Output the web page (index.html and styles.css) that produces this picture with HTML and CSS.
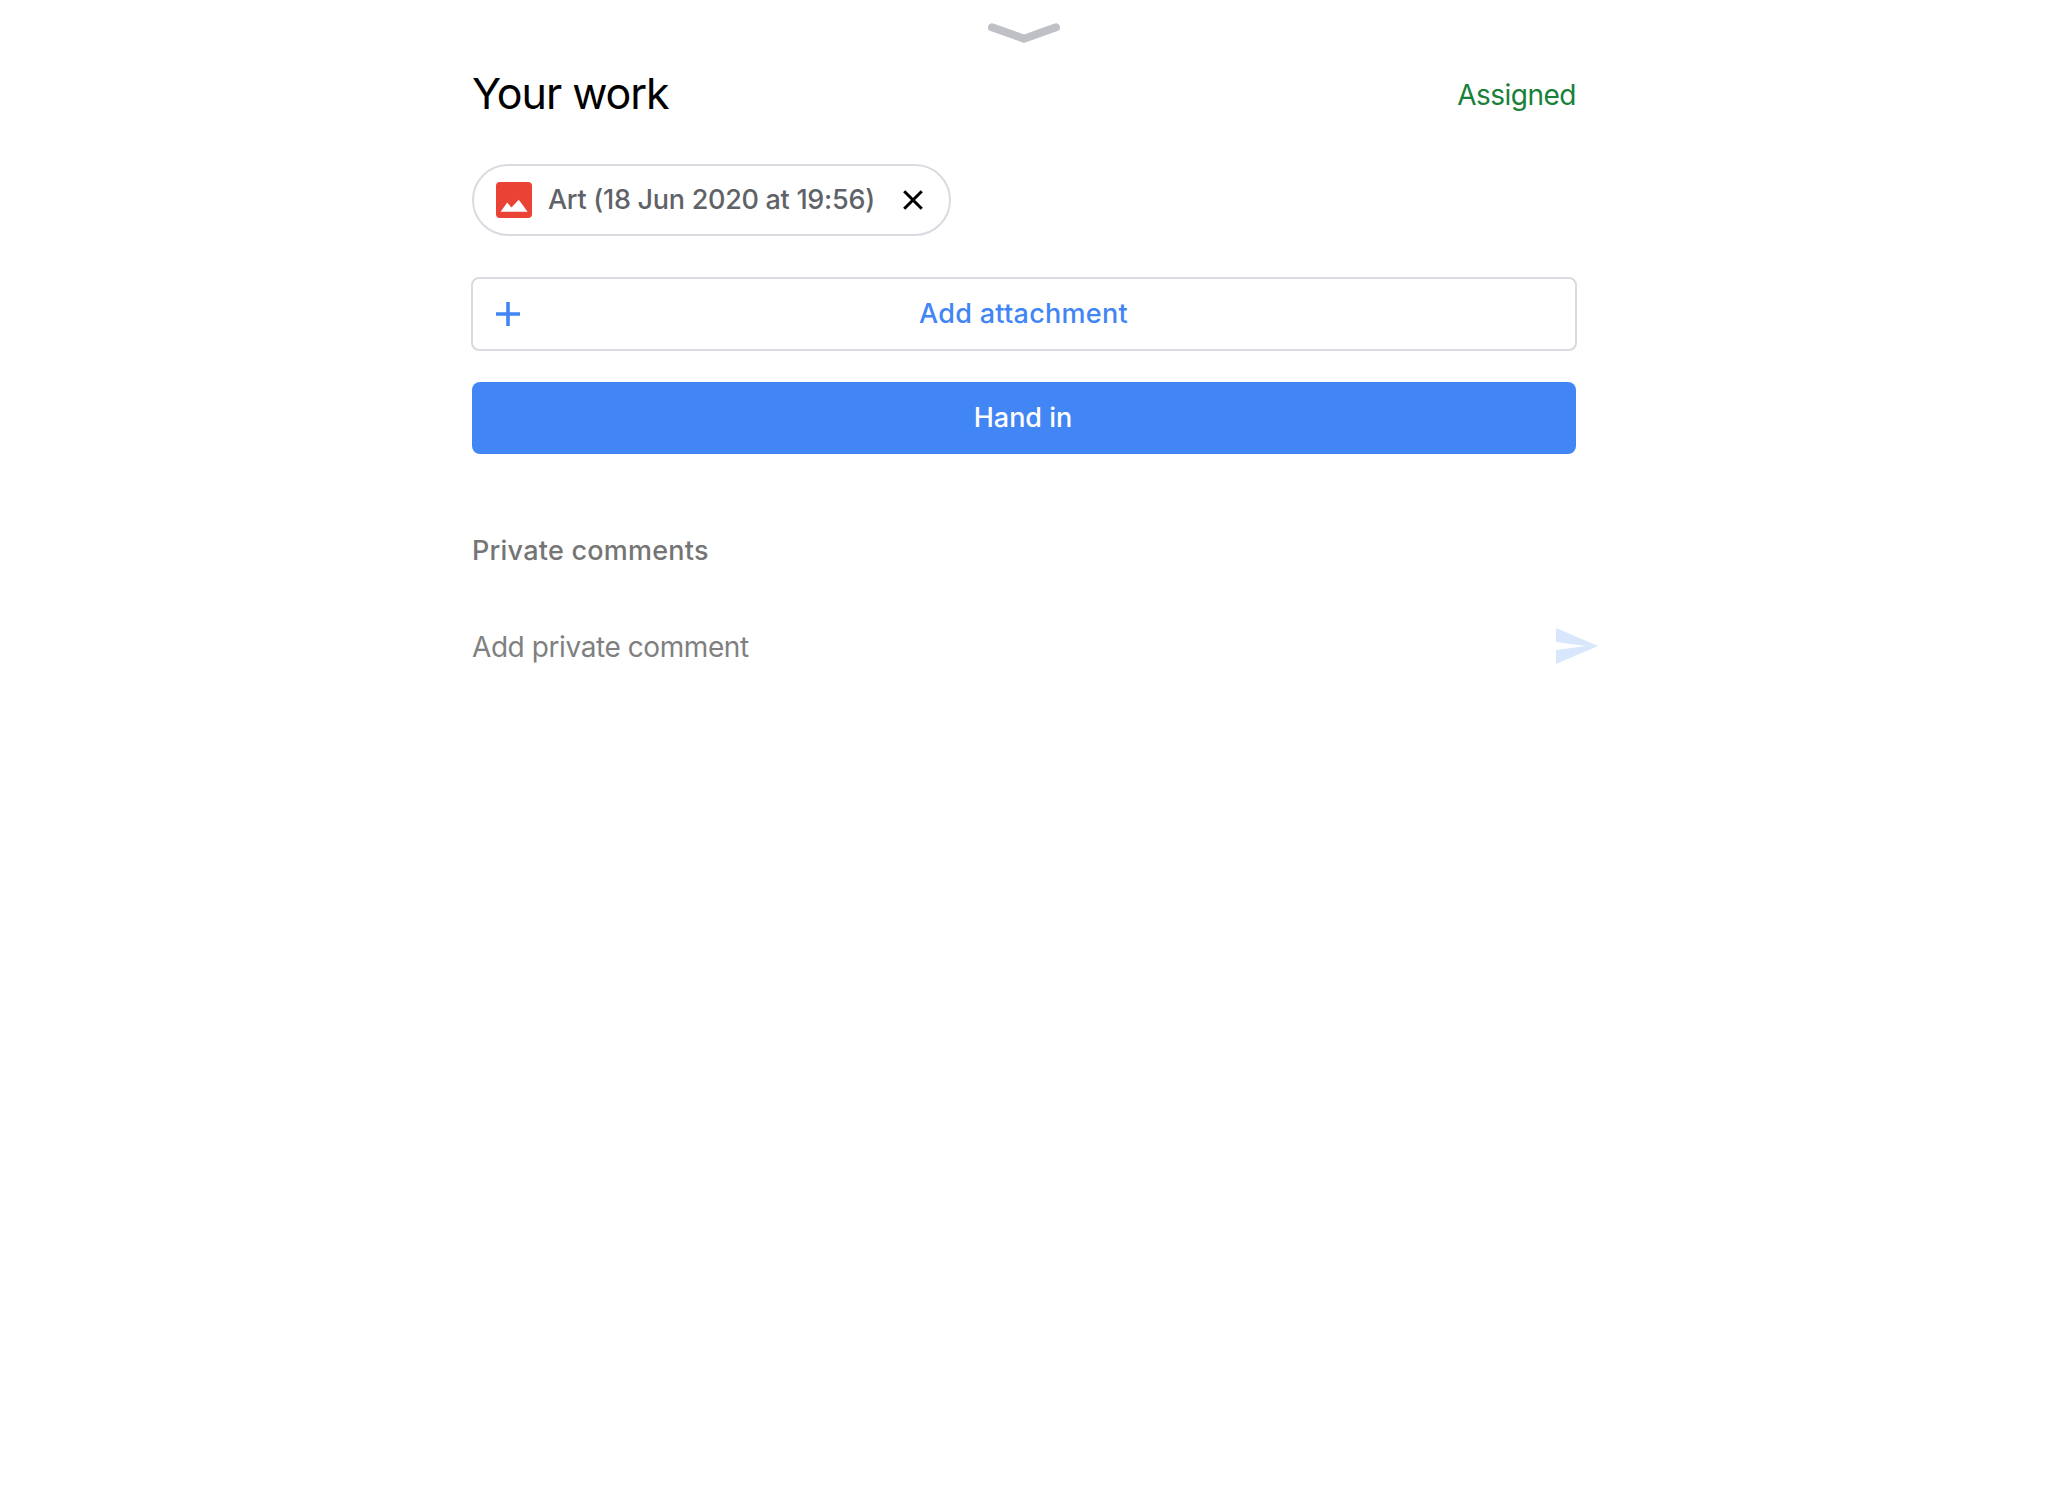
FILE: index.html
```html
<!DOCTYPE html>
<html lang="en">
<head>
    <meta charset="utf-8">
    <title>Your work</title>
    <link rel="stylesheet" href="styles.css">
</head>
<body>
    <div class="handle">
        <svg width="72" height="20" viewBox="0 0 72 20">
            <path d="M4 4.3L36 15.7L68 4.3" fill="none" stroke="#bdc1c6" stroke-width="8" stroke-linecap="round" stroke-linejoin="round"/>
        </svg>
    </div>

    <main class="container">
        <header class="work-header">
            <h1>Your work</h1>
            <span class="status">Assigned</span>
        </header>

        <div class="chip">
            <svg class="chip-icon" width="36" height="36" viewBox="0 0 36 36">
                <rect width="36" height="36" rx="4" fill="#ea4335"/>
                <path d="M4.6 29.8L11.2 20.6L15.4 25.6L22.8 17.8L31.6 29.8Z" fill="#fff"/>
            </svg>
            <span class="chip-name">Art (18 Jun 2020 at 19:56)</span>
            <button class="chip-remove" aria-label="Remove">
                <svg width="20" height="20" viewBox="0 0 20 20">
                    <path d="M1.2 1.2L18.8 18.8M18.8 1.2L1.2 18.8" stroke="#000" stroke-width="3"/>
                </svg>
            </button>
        </div>

        <button class="btn btn-add">
            <svg width="24" height="24" viewBox="0 0 24 24">
                <path d="M12 0V24M0 12H24" stroke="#4285f4" stroke-width="3.6"/>
            </svg>
            <span class="add-label">Add attachment</span>
        </button>
        <button class="btn btn-submit"><span class="submit-label">Hand in</span></button>

        <h2>Private comments</h2>
        <form class="comment-form">
            <input type="text" placeholder="Add private comment">
            <button type="button" class="send" aria-label="Send">
                <svg width="48" height="48" viewBox="0 0 24 24">
                    <path d="M2.01 21L23 12 2.01 3 2 10l15 2-15 2z" fill="#d9e7fd"/>
                </svg>
            </button>
        </form>
    </main>
</body>
</html>
```

FILE: styles.css
```css
* {
    box-sizing: border-box;
}
body {
    margin: 0;
    background: #fff;
    font-family: Inter, "Liberation Sans", sans-serif;
    font-size: 27px;
}
button {
    border: none;
    background: none;
    padding: 0;
    font: inherit;
    cursor: pointer;
}
svg {
    display: block;
}
.handle {
    display: flex;
    justify-content: center;
    height: 60px;
    padding-top: 23px;
}
.container {
    width: 1104px;
    margin: 0 auto;
}
.work-header {
    display: flex;
    justify-content: space-between;
    align-items: center;
    height: 68px;
    margin-bottom: 36px;
}
h1 {
    margin: 0;
    font-size: 43px;
    font-weight: 400;
    line-height: 66px;
    padding-bottom: 2px;
    letter-spacing: -1.05px;
    color: #000;
}
.status {
    font-size: 28px;
    letter-spacing: -0.5px;
    padding-top: 1px;
    color: #188038;
}
.chip {
    display: flex;
    align-items: center;
    width: 479px;
    height: 72px;
    padding: 0 26px 0 22px;
    border: 2px solid #dadae0;
    border-radius: 36px;
}
.chip-name {
    margin-left: 16px;
    padding-bottom: 2px;
    font-weight: 500;
    letter-spacing: -0.28px;
    white-space: nowrap;
    color: #5f6368;
}
.chip-remove {
    margin-left: auto;
}
.btn {
    display: flex;
    align-items: center;
    justify-content: center;
    font-weight: 500;
    border-radius: 8px;
}
.btn-add {
    width: 1106px;
    height: 74px;
    margin: 41px -1px 31px;
    padding: 0 48px 0 23px;
    border: 2px solid #dadae0;
    color: #4285f4;
}
.add-label {
    flex: 1;
    padding-bottom: 2px;
    letter-spacing: 0.28px;
}
.btn-submit {
    width: 1104px;
    height: 72px;
    padding: 0 2px 2px 0;
    background: #4285f4;
    color: #fff;
}
h2 {
    margin: 77px 0 51px;
    font-size: 27px;
    font-weight: 500;
    line-height: 40px;
    letter-spacing: 0.23px;
    color: #757575;
}
.comment-form {
    display: flex;
    align-items: center;
    height: 48px;
    margin-right: -24px;
}
.comment-form input {
    flex: 1;
    padding: 1px 0 0;
    border: none;
    outline: none;
    background: none;
    font: inherit;
    font-size: 28px;
    letter-spacing: -0.42px;
}
.comment-form input::placeholder {
    color: #808080;
}
```
